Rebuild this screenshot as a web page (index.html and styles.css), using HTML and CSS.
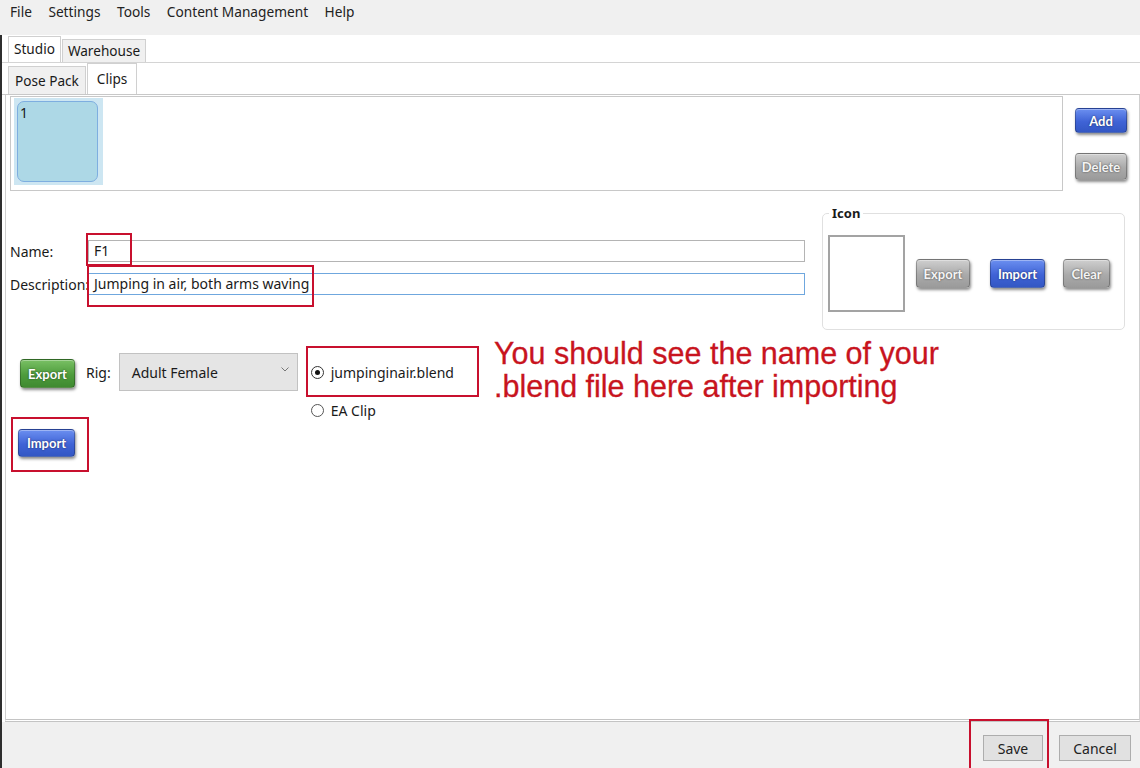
FILE: index.html
```html
<!DOCTYPE html>
<html lang="en">
<head>
    <meta charset="UTF-8">
    <meta name="viewport" content="width=device-width, initial-scale=1.0">
    <title>Studio - Clips</title>
    <link rel="stylesheet" href="styles.css">
</head>
<body>
    <div class="app">
        <!-- Menu bar -->
        <div class="menubar">
            <span>File</span>
            <span>Settings</span>
            <span>Tools</span>
            <span>Content Management</span>
            <span>Help</span>
        </div>

        <div class="workspace">
            <div class="tabs tabs-outer">
                <div class="tab active">Studio</div>
                <div class="tab">Warehouse</div>
            </div>
            <div class="tabs tabs-inner">
                <div class="tab">Pose Pack</div>
                <div class="tab active">Clips</div>
            </div>

            <div class="panel">
                <!-- Clip list with add / delete -->
                <div class="clips-row">
                    <div class="clip-list">
                        <div class="clip-slot">
                            <div class="clip-tile">1</div>
                        </div>
                    </div>
                    <div class="clip-buttons">
                        <button class="gloss blue btn-add">Add</button>
                        <button class="gloss grey btn-delete">Delete</button>
                    </div>
                </div>

                <!-- Name, description and icon -->
                <div class="details">
                    <div class="fields">
                        <div class="field-row">
                            <label>Name:</label>
                            <div class="text-input">F1</div>
                        </div>
                        <div class="field-row">
                            <label>Description:</label>
                            <div class="text-input focused">Jumping in air, both arms waving</div>
                        </div>
                    </div>
                    <fieldset class="icon-group">
                        <legend>Icon</legend>
                        <div class="icon-box"></div>
                        <button class="gloss grey btn-icon-export">Export</button>
                        <button class="gloss blue btn-icon-import">Import</button>
                        <button class="gloss grey btn-icon-clear">Clear</button>
                    </fieldset>
                </div>

                <!-- Rig selection and source -->
                <div class="rig-row">
                    <button class="gloss green btn-export">Export</button>
                    <span class="rig-label">Rig:</span>
                    <div class="combo">
                        <span>Adult Female</span>
                        <svg class="chevron" width="8" height="5" viewBox="0 0 8 5"><path d="M0.5 0.5 L4 4 L7.5 0.5" fill="none" stroke="#777" stroke-width="1"/></svg>
                    </div>
                    <div class="sources">
                        <div class="radio-row"><span class="radio checked"></span>jumpinginair.blend</div>
                        <div class="radio-row"><span class="radio"></span>EA Clip</div>
                    </div>
                </div>
                <div class="import-row">
                    <button class="gloss blue btn-import">Import</button>
                </div>
            </div>
        </div>

        <div class="footer">
            <button class="plain-button save">Save</button>
            <button class="plain-button cancel">Cancel</button>
        </div>

        <!-- Annotations -->
        <div class="note">You should see the name of your<br>.blend file here after importing</div>
        <div class="mark mark-name"></div>
        <div class="mark mark-desc"></div>
        <div class="mark mark-blend"></div>
        <div class="mark mark-import"></div>
        <div class="mark mark-save"></div>
    </div>
</body>
</html>
```

FILE: styles.css
```css
/* Base window */
body {
    margin: 0;
    font-family: "Noto Sans", "Open Sans", sans-serif;
    font-size: 13px;
    color: #1a1a1a;
    background: #fff;
}
.app {
    position: relative;
    width: 1140px;
    height: 768px;
    overflow: hidden;
    display: flex;
    flex-direction: column;
}
.menubar {
    height: 35px;
    background-color: #f0f0f0;
    display: flex;
    gap: 16.5px;
    padding: 2px 0 0 10px;
    box-sizing: border-box;
    font-size: 13.7px;
    color: #222;
}
.workspace {
    flex: 1;
    display: flex;
    flex-direction: column;
    border-left: 2px solid #2e2e2e;
    background: #fff;
    min-height: 0;
}
/* Tabs */
.tabs {
    display: flex;
    align-items: flex-end;
    padding-left: 6px;
    border-bottom: 1px solid #d4d4d4;
    box-sizing: border-box;
    font-size: 13.6px;
}
.tabs-outer {
    height: 28px;
}
.tabs-inner {
    height: 32px;
    border-bottom-color: #c8c8c8;
}
.tab {
    background: #f0f0f0;
    border: 1px solid #d0d0d0;
    border-bottom: none;
    padding: 0 5px;
    height: 22px;
    line-height: 21px;
    margin-right: 1px;
}
.tab.active {
    background: #fff;
    height: 25px;
    line-height: 24px;
}
.tabs-inner .tab {
    height: 27px;
    line-height: 27px;
    padding: 0 6px;
}
.tabs-inner .tab.active {
    height: 30px;
    line-height: 30px;
    padding: 0 9px;
}
.panel {
    flex: 1;
    margin-left: 3px;
    border-left: 1px solid #cfcfcf;
    border-right: 1px solid #cfcfcf;
    border-bottom: 3px double #c4c4c4;
    padding: 1px 0 0 4px;
    min-height: 0;
}
/* Clip list */
.clips-row {
    display: flex;
}
.clip-list {
    flex: 1;
    height: 95px;
    border: 1px solid #c8c8c8;
    box-sizing: border-box;
    padding: 1px 3px;
}
.clip-slot {
    width: 89px;
    height: 87px;
    background: #cde6f2;
    padding: 3px 3px;
    box-sizing: border-box;
}
.clip-tile {
    width: 81px;
    height: 81px;
    box-sizing: border-box;
    background: #add8e6;
    border: 1px solid #7eaee0;
    border-radius: 7px;
    padding: 3px 2px;
    font-size: 14px;
    line-height: 16px;
}
.clip-buttons {
    width: 76px;
    display: flex;
    flex-direction: column;
    padding: 12px 0 0 12px;
    box-sizing: border-box;
    gap: 20px;
}
/* Glossy action buttons */
.gloss {
    font-family: "Lato", "Noto Sans", sans-serif;
    font-weight: bold;
    font-size: 13px;
    color: #fff;
    border: 1px solid rgba(0, 0, 0, 0.25);
    border-radius: 4px;
    padding: 0;
    cursor: pointer;
    text-shadow: 0 0 2px rgba(0, 0, 0, 0.6);
    box-shadow: 1px 2px 3px rgba(0, 0, 0, 0.45), inset 0 1px 0 rgba(255, 255, 255, 0.35);
}
.gloss.blue {
    background: linear-gradient(#6b8ff0, #3f63d6 55%, #3357c4);
}
.gloss.grey {
    background: linear-gradient(#cfcfcf, #aaaaaa 55%, #9b9b9b);
    color: #f4f4f4;
}
.gloss.green {
    background: linear-gradient(#79c064, #4e9c3c 55%, #3f8a30);
}
.btn-add { width: 52px; height: 25px; }
.btn-delete { width: 52px; height: 27px; }
/* Name / description fields */
.details {
    display: flex;
    align-items: flex-start;
    margin-top: 14px;
}
.fields {
    width: 795px;
    margin-top: 35px;
    display: flex;
    flex-direction: column;
    gap: 11px;
}
.field-row {
    display: flex;
    align-items: center;
}
.field-row label {
    width: 78px;
    font-size: 14px;
}
.text-input {
    flex: 1;
    height: 22px;
    border: 1px solid #b4b4b4;
    box-sizing: border-box;
    padding: 0 5px;
    line-height: 20px;
    font-size: 14px;
}
.text-input.focused {
    border-color: #6fa7de;
}
/* Icon group */
.icon-group {
    margin: -1px 0 0 17px;
    width: 303px;
    height: 126px;
    box-sizing: border-box;
    border: 1px solid #e0e0e0;
    border-radius: 5px;
    padding: 13px 0 0 5px;
    display: flex;
    align-items: flex-start;
}
.icon-group legend {
    font-weight: bold;
    font-size: 13px;
    padding: 0 3px;
    margin-left: 1px;
}
.icon-box {
    width: 77px;
    height: 77px;
    border: 2px solid #a3a3a3;
    box-sizing: border-box;
    margin-right: 11px;
}
.icon-group .gloss {
    height: 29px;
    margin-top: 24px;
}
.btn-icon-export { width: 54px; margin-right: 20px; }
.btn-icon-import { width: 55px; margin-right: 18px; }
.btn-icon-clear { width: 47px; }
/* Rig row */
.rig-row {
    display: flex;
    align-items: flex-start;
    margin-top: 23px;
}
.btn-export {
    width: 55px;
    height: 29px;
    margin: 6px 0 0 10px;
}
.rig-label {
    font-size: 14px;
    margin: 10px 8px 0 11px;
}
.combo {
    width: 179px;
    height: 38px;
    box-sizing: border-box;
    background: #e5e5e5;
    border: 1px solid #c2c2c2;
    display: flex;
    align-items: center;
    justify-content: space-between;
    padding: 0 8px 0 12px;
    font-size: 14px;
}
.chevron {
    margin-bottom: 6px;
}
.sources {
    margin-left: 12px;
    display: flex;
    flex-direction: column;
}
.radio-row {
    height: 38px;
    display: flex;
    align-items: center;
    font-size: 14px;
    padding-left: 1px;
}
.radio {
    width: 11px;
    height: 11px;
    border: 1px solid #333;
    border-radius: 50%;
    margin-right: 7px;
    position: relative;
    box-sizing: content-box;
}
.radio.checked::after {
    content: "";
    position: absolute;
    left: 3px;
    top: 3px;
    width: 5px;
    height: 5px;
    border-radius: 50%;
    background: #111;
}
.radio-row + .radio-row .radio {
    border-color: #555;
}
.import-row {
    margin-top: 0;
}
.btn-import {
    width: 57px;
    height: 28px;
    margin-left: 8px;
}
/* Bottom button bar */
.footer {
    height: 46px;
    background: #f0f0f0;
    border-left: 2px solid #2e2e2e;
    display: flex;
    justify-content: flex-end;
    align-items: flex-start;
    gap: 16px;
    padding: 13px 9px 0 0;
    box-sizing: border-box;
}
.plain-button {
    height: 26px;
    background: #e1e1e1;
    border: 1px solid #adadad;
    font-family: "Noto Sans", sans-serif;
    font-size: 14px;
    color: #222;
    padding: 0;
}
.save { width: 60px; }
.cancel { width: 72px; }
/* Red annotations */
.note {
    position: absolute;
    left: 494px;
    top: 337px;
    font-family: "Liberation Sans", Arial, sans-serif;
    font-size: 30.5px;
    line-height: 33px;
    color: #c8141e;
    -webkit-text-stroke: 0.3px #c8141e;
}
.mark {
    position: absolute;
    border: 2px solid #c8102e;
}
.mark-name { left: 86px; top: 233px; width: 42px; height: 29px; }
.mark-desc { left: 87px; top: 265px; width: 223px; height: 38px; }
.mark-blend { left: 306px; top: 346px; width: 169px; height: 47px; }
.mark-import { left: 11px; top: 417px; width: 74px; height: 51px; }
.mark-save { left: 969px; top: 719px; width: 76px; height: 50px; }
```
